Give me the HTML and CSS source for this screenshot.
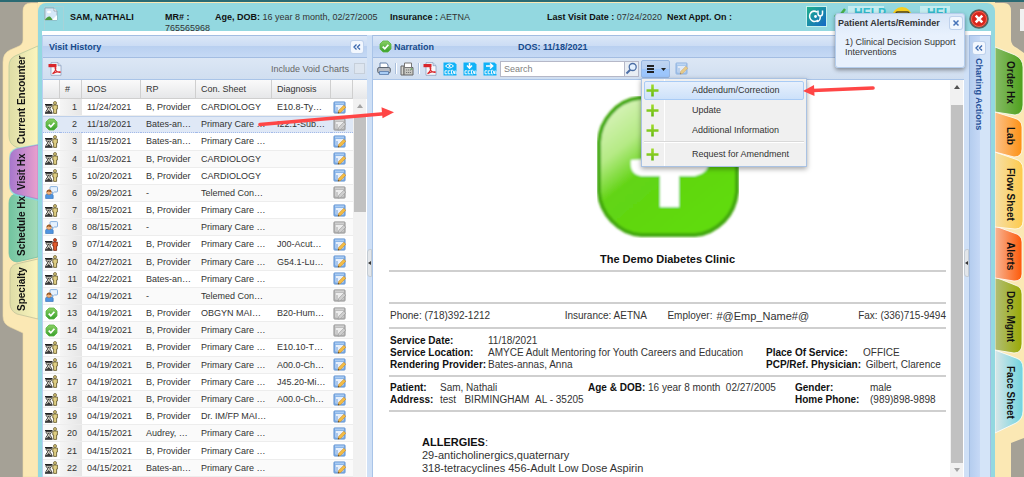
FILE: index.html
```html
<!DOCTYPE html>
<html lang="en">
<head>
<meta charset="utf-8">
<title>Visit History</title>
<link rel="stylesheet" href="styles.css">
</head>
<body>
<svg class="defs" aria-hidden="true">
  <defs>
    <linearGradient id="gCheck" x1="0" y1="0" x2="0" y2="1"><stop offset="0" stop-color="#8ad063"/><stop offset="1" stop-color="#38a02c"/></linearGradient>
    <linearGradient id="gPlus" x1="0" y1="0" x2="0" y2="1"><stop offset="0" stop-color="#a2dc2c"/><stop offset="1" stop-color="#64b812"/></linearGradient>
    <linearGradient id="gLogo" x1="0" y1="0" x2=".8" y2="1"><stop offset="0" stop-color="#e6f7cf"/><stop offset=".3" stop-color="#b5ea85"/><stop offset=".48" stop-color="#62d414"/><stop offset="1" stop-color="#60dc0a"/></linearGradient>
    <linearGradient id="gSteth" x1="0" y1="0" x2="1" y2="1"><stop offset="0" stop-color="#1fb38a"/><stop offset="1" stop-color="#1565c8"/></linearGradient>
    <filter id="soft"><feGaussianBlur stdDeviation="1.3"/></filter>
    <symbol id="wait" viewBox="0 0 13 13">
      <path d="M0 3.700h7.500M0 12h7.500" stroke="#222" stroke-width="1.300"/>
      <path d="M1 4.500h5.500v.7L4.700 7.900l1.800 2.300v1.300H1v-1.300l1.800-2.300L1 5.200z" fill="#d9d5c6" stroke="#333" stroke-width=".9"/>
      <path d="M1.700 11.300 3.700 9l2.100 2.300zM2.300 5.700h2.900L3.700 7.200z" fill="#333"/>
      <circle cx="10" cy="2" r="1.500" fill="#d9c878" stroke="#5e5328" stroke-width=".7"/>
      <path d="M7.800 4h4.600v4h-.8v4.400H8.600V8h-.8z" fill="#e0cf83" stroke="#5e5328" stroke-width=".8"/>
    </symbol>
    <symbol id="waitred" viewBox="0 0 13 13">
      <path d="M0 3.700h7.500M0 12h7.500" stroke="#222" stroke-width="1.300"/>
      <path d="M1 4.500h5.500v.7L4.700 7.900l1.800 2.300v1.300H1v-1.300l1.800-2.300L1 5.200z" fill="#d9d5c6" stroke="#333" stroke-width=".9"/>
      <path d="M1.700 11.300 3.700 9l2.100 2.300zM2.300 5.700h2.900L3.700 7.200z" fill="#333"/>
      <circle cx="10" cy="2" r="1.500" fill="#e04a22" stroke="#70220f" stroke-width=".7"/>
      <path d="M7.800 4h4.600v4h-.8v4.400H8.600V8h-.8z" fill="#e25a2c" stroke="#70220f" stroke-width=".8"/>
    </symbol>
    <symbol id="check" viewBox="0 0 13 13">
      <path d="M4 1h5l3 3v5l-3 3H4L1 9V4z" fill="url(#gCheck)" stroke="#5cb544" stroke-width=".8" stroke-linejoin="round"/>
      <path d="M3.700 6.600 5.800 8.700 9.400 4.700" fill="none" stroke="#fff" stroke-width="1.700"/>
    </symbol>
    <symbol id="chat" viewBox="0 0 13 13">
      <path d="M6 .6h5.500q1 0 1 1v3.400q0 1-1 1H9.500L7.500 7.800V6H6Q5 6 5 5V1.600q0-1 1-1z" fill="#e6f1fd" stroke="#6f9fd6" stroke-width=".8"/>
      <path d="M.6 12.500V9.500Q.6 8 2.300 8h3.900q2 0 2 1.500v3z" fill="#4f94e0" stroke="#2c6bb5" stroke-width=".6"/>
      <circle cx="4" cy="6.300" r="2.400" fill="#f0b27c" stroke="#b5713a" stroke-width=".5"/>
      <path d="M1.600 6.100q.2-2.500 2.500-2.500 2.200 0 2.300 2.200-2.200.4-2.900-.6-.6 1-1.900.9z" fill="#9a5a25"/>
    </symbol>
    <symbol id="edit" viewBox="0 0 13 13">
      <rect x=".8" y=".8" width="11.400" height="11.400" rx="1" fill="#6fa2e0" stroke="#7fa6d8" stroke-width=".8"/>
      <path d="M2 1.500h9v2H2z" fill="#a9cbf2"/><path d="M2.500 4h8v6.500h-8z" fill="#e6effa"/>
      <path d="M3.300 6h1.400v4.500H3.300z" fill="#8fb5e6"/>
      <path d="m5 12.200.8-2.900 5-5 2 1.900-5 5.200z" fill="#f3bd45" stroke="#c98322" stroke-width=".5"/>
      <path d="m5 12.200.4-1.500 1.100 1z" fill="#5b4020"/>
    </symbol>
    <symbol id="editoff" viewBox="0 0 13 13">
      <rect x=".8" y=".8" width="11.400" height="11.400" rx="1" fill="#adadad" stroke="#a2a2a2" stroke-width=".8"/>
      <path d="M2 1.500h9v2H2z" fill="#cfcfcf"/><path d="M2.500 4h8v6.500h-8z" fill="#ececec"/>
      <path d="M3.300 6h1.400v4.500H3.300z" fill="#bbb"/>
      <path d="m5 12.200.8-2.900 5-5 2 1.900-5 5.200z" fill="#cfcfcf" stroke="#8d8d8d" stroke-width=".5"/>
    </symbol>
    <symbol id="pdf" viewBox="0 0 14 14">
      <path d="M3 .7h7l3 3v9.600H3z" fill="#f7f8fb" stroke="#8297b8" stroke-width=".7"/>
      <path d="M10 .7v3h3" fill="#cbd8ea" stroke="#8297b8" stroke-width=".6"/>
      <path d="M.5 2h8v3.200h-8z" fill="#d9262b"/>
      <path d="M4.500 11.700q4-3.200 3.200-6-.8-1-.6.500.4 3.700 4.500 4.300 1.400 0 .4-.7-3.500-.4-7.500 1.900z" fill="none" stroke="#d9262b" stroke-width="1.100"/>
    </symbol>
    <symbol id="plus" viewBox="0 0 13 13"><path d="M5.200.5h2.600v4.700h4.700v2.600H7.800v4.700H5.200V7.800H.5V5.200h4.700z" fill="url(#gPlus)"/></symbol>
    <symbol id="ccda" viewBox="0 0 14 14">
      <path d="M.5.500h11L13.500 2.500v11H.5z" fill="#10b2f7"/>
      <path d="M4.300 8.800H2v3h2.300M7.500 8.800H5.200v3h2.300M8.500 8.300h1.200q1 .4 1 1.800t-1 1.800H8.500zM11.500 12V9.700l.7-1 .8 1V12" fill="none" stroke="#fff" stroke-width=".9"/>
    </symbol>
    <symbol id="dbl" viewBox="0 0 12 12"><path d="M5.500 3.500 3 6l2.500 2.500M9 3.500 6.500 6 9 8.500" fill="none" stroke="#3a68ae" stroke-width="1.300"/></symbol>
  </defs>
</svg>

<div class="app">
  <nav class="rail rail-left" aria-label="Chart sections">
    <svg class="rail-art" viewBox="0 0 38 475" width="38" height="475" aria-hidden="true">
      <defs>
        <linearGradient id="lt1"><stop offset="0" stop-color="#dedda6"/><stop offset="1" stop-color="#fbf5bd"/></linearGradient>
        <linearGradient id="lt2"><stop offset="0" stop-color="#a777cd"/><stop offset="1" stop-color="#e9a0cd"/></linearGradient>
        <linearGradient id="lt3"><stop offset="0" stop-color="#72c4a0"/><stop offset="1" stop-color="#a5dbbb"/></linearGradient>
      </defs>
      <path d="M38 1H31Q23 1 23 9V38Q23 43 17 45L10 48Q3 51 3 60V314Q3 322 10 325L23 331V475H38z" fill="#fbe8b4" stroke="#eedaa4" stroke-width=".6"/>
      <path d="M38 44 15 54Q9 57 9 64V134Q9 142 16 145L38 152z" fill="url(#lt1)" stroke="#b9c99c" stroke-width=".8"/>
      <path d="M38 257 16 262Q10 264 10 270V301Q10 309 17 312L38 317z" fill="url(#lt1)" stroke="#c1c29a" stroke-width=".8"/>
      <path d="M38 187 15 192Q9 194 9 201V251Q9 259 17 260L38 255z" fill="url(#lt3)" stroke="#72bfa5" stroke-width=".8"/>
      <path d="M38 142 16 146Q9 148 9 156V183Q9 192 17 194L38 199z" fill="#79dbe8" fill-opacity=".7"/>
      <path d="M38 143 17 147Q10 149 10 157V182Q10 190 17 192L38 197z" fill="url(#lt2)" stroke="#a876c4" stroke-width=".6"/>
    </svg>
    <div class="tabs">
      <button class="tab lt-current">Current Encounter</button>
      <button class="tab lt-visit">Visit Hx</button>
      <button class="tab lt-schedule">Schedule Hx</button>
      <button class="tab lt-specialty">Specialty</button>
    </div>
  </nav>

  <main class="chart">
    <header class="banner">
      <svg class="broken" viewBox="0 0 20 24" width="20" height="24" role="img" aria-label="Patient photo">
        <path d="M.5 24V.5h19V24" fill="none" stroke="#a6d3d8"/>
        <path d="M1 2h9l3 3v9H1z" fill="#d6e8f8" stroke="#8b99a5" stroke-width=".7"/>
        <path d="M10 2v3h3" fill="#fff" stroke="#8b99a5" stroke-width=".7"/>
        <ellipse cx="5" cy="6" rx="2" ry="1.200" fill="#fff"/>
        <path d="M1 14q2-4 5-3.500l3 3.500z" fill="#4b9c3a"/><path d="m8 14 5-5v5z" fill="#fff"/>
      </svg>
      <b class="b-name">SAM, NATHALI</b>
      <span class="b-mr"><b>MR# :</b><br>765565968</span>
      <span class="b-age"><b>Age, DOB:</b> 16 year 8 month, 02/27/2005</span>
      <span class="b-ins"><b>Insurance :</b> AETNA</span>
      <span class="b-last"><b>Last Visit Date :</b> 07/24/2020&nbsp; <b>Next Appt. On :</b></span>
      <div class="b-tools">
        <svg viewBox="0 0 21 21" width="21" height="21" role="img" aria-label="Clinical tools">
          <rect x=".5" y=".5" width="20" height="20" fill="url(#gSteth)" stroke="#c6f0ee"/>
          <path d="M11 6Q6.500 3.500 4 8q-1.500 4.500 2.500 7 3 1.300 5.500-1M12 4.500v3q0 2.500 2.200 2.500t2.300-2.500v-3M14.200 10v2q-.5 3.500-3.500 3.500" fill="none" stroke="#fff" stroke-width="1.500"/>
          <circle cx="9.500" cy="10.500" r="1.400" fill="#fff"/>
        </svg>
        <svg class="help" viewBox="0 0 120 24" width="120" height="24" aria-hidden="true">
          <path d="M16 0h36v24H16zM88 0h30v24H88z" fill="#c4ecf0"/>
          <path d="m3 9 3 3 7-9" fill="none" stroke="#48b04c" stroke-width="2.500"/>
          <circle cx="70" cy="11" r="10" fill="#f7cf20"/><rect x="64" y="6" width="13" height="9" rx="1.500" fill="#fff2a0" stroke="#50431a" stroke-width="1.500"/>
          <text x="22" y="11" class="help-text">HELP</text><text x="95" y="11" class="help-text">HEL</text>
        </svg>
        <button class="close-chart" aria-label="Close chart">
          <svg viewBox="0 0 20 20" width="20" height="20"><circle cx="10" cy="10" r="9" fill="#d9261c" stroke="#55635f" stroke-width="1.600"/><circle cx="10" cy="10" r="7.500" fill="none" stroke="#ee6a58"/><path d="m6.700 6.700 6.600 6.600m0-6.600-6.600 6.600" stroke="#fff" stroke-width="2.600"/></svg>
        </button>
      </div>
    </header>

    <div class="workspace">
      <section class="panel history">
        <div class="title"><h2>Visit History</h2><button class="tool" aria-label="Collapse"><svg width="12" height="12"><use href="#dbl"/></svg></button></div>
        <div class="toolbar">
          <button class="icon" aria-label="Export PDF"><svg width="14" height="14"><use href="#pdf"/></svg></button>
          <label class="void">Include Void Charts <input type="checkbox" disabled></label>
        </div>
        <div class="grid">
          <table>
            <colgroup><col class="c-stat"><col class="c-num"><col class="c-dos"><col class="c-rp"><col class="c-con"><col class="c-diag"><col class="c-edit"></colgroup>
            <thead><tr><th></th><th>#</th><th>DOS</th><th>RP</th><th>Con. Sheet</th><th>Diagnosis</th><th></th></tr></thead>
            <tbody>
              <tr><td><svg><use href="#wait"/></svg></td><td>1</td><td>11/24/2021</td><td>B, Provider</td><td>CARDIOLOGY</td><td>E10.8-Ty…</td><td><svg><use href="#edit"/></svg></td></tr>
              <tr class="selected"><td><svg><use href="#check"/></svg></td><td>2</td><td>11/18/2021</td><td>Bates-an…</td><td>Primary Care …</td><td>I22.1-Sub…</td><td><svg><use href="#editoff"/></svg></td></tr>
              <tr><td><svg><use href="#wait"/></svg></td><td>3</td><td>11/15/2021</td><td>Bates-an…</td><td>Primary Care …</td><td></td><td><svg><use href="#edit"/></svg></td></tr>
              <tr><td><svg><use href="#wait"/></svg></td><td>4</td><td>11/03/2021</td><td>B, Provider</td><td>CARDIOLOGY</td><td></td><td><svg><use href="#edit"/></svg></td></tr>
              <tr><td><svg><use href="#wait"/></svg></td><td>5</td><td>10/20/2021</td><td>B, Provider</td><td>CARDIOLOGY</td><td></td><td><svg><use href="#edit"/></svg></td></tr>
              <tr><td><svg><use href="#chat"/></svg></td><td>6</td><td>09/29/2021</td><td>-</td><td>Telemed Con…</td><td></td><td><svg><use href="#editoff"/></svg></td></tr>
              <tr><td><svg><use href="#wait"/></svg></td><td>7</td><td>08/15/2021</td><td>B, Provider</td><td>Primary Care …</td><td></td><td><svg><use href="#edit"/></svg></td></tr>
              <tr><td><svg><use href="#chat"/></svg></td><td>8</td><td>08/15/2021</td><td>-</td><td>Primary Care …</td><td></td><td><svg><use href="#editoff"/></svg></td></tr>
              <tr><td><svg><use href="#waitred"/></svg></td><td>9</td><td>07/14/2021</td><td>B, Provider</td><td>Primary Care …</td><td>J00-Acut…</td><td><svg><use href="#edit"/></svg></td></tr>
              <tr><td><svg><use href="#wait"/></svg></td><td>10</td><td>04/27/2021</td><td>B, Provider</td><td>Primary Care …</td><td>G54.1-Lu…</td><td><svg><use href="#edit"/></svg></td></tr>
              <tr><td><svg><use href="#wait"/></svg></td><td>11</td><td>04/22/2021</td><td>Bates-an…</td><td>Primary Care …</td><td></td><td><svg><use href="#edit"/></svg></td></tr>
              <tr><td><svg><use href="#chat"/></svg></td><td>12</td><td>04/19/2021</td><td>-</td><td>Telemed Con…</td><td></td><td><svg><use href="#editoff"/></svg></td></tr>
              <tr><td><svg><use href="#check"/></svg></td><td>13</td><td>04/19/2021</td><td>B, Provider</td><td>OBGYN MAI…</td><td>B20-Hum…</td><td><svg><use href="#editoff"/></svg></td></tr>
              <tr><td><svg><use href="#check"/></svg></td><td>14</td><td>04/19/2021</td><td>B, Provider</td><td>Primary Care …</td><td></td><td><svg><use href="#editoff"/></svg></td></tr>
              <tr><td><svg><use href="#wait"/></svg></td><td>15</td><td>04/19/2021</td><td>B, Provider</td><td>Primary Care …</td><td>E10.10-T…</td><td><svg><use href="#edit"/></svg></td></tr>
              <tr><td><svg><use href="#wait"/></svg></td><td>16</td><td>04/19/2021</td><td>B, Provider</td><td>Primary Care …</td><td>A00.0-Ch…</td><td><svg><use href="#edit"/></svg></td></tr>
              <tr><td><svg><use href="#wait"/></svg></td><td>17</td><td>04/19/2021</td><td>B, Provider</td><td>Primary Care …</td><td>J45.20-Mi…</td><td><svg><use href="#edit"/></svg></td></tr>
              <tr><td><svg><use href="#wait"/></svg></td><td>18</td><td>04/19/2021</td><td>B, Provider</td><td>Primary Care …</td><td>A00.0-Ch…</td><td><svg><use href="#edit"/></svg></td></tr>
              <tr><td><svg><use href="#wait"/></svg></td><td>19</td><td>04/19/2021</td><td>B, Provider</td><td>Dr. IM/FP MAI…</td><td></td><td><svg><use href="#edit"/></svg></td></tr>
              <tr><td><svg><use href="#wait"/></svg></td><td>20</td><td>04/15/2021</td><td>Audrey, …</td><td>Primary Care …</td><td></td><td><svg><use href="#edit"/></svg></td></tr>
              <tr><td><svg><use href="#wait"/></svg></td><td>21</td><td>04/15/2021</td><td>B, Provider</td><td>Primary Care …</td><td></td><td><svg><use href="#edit"/></svg></td></tr>
              <tr><td><svg><use href="#wait"/></svg></td><td>22</td><td>04/15/2021</td><td>Bates-an…</td><td>Primary Care …</td><td></td><td><svg><use href="#edit"/></svg></td></tr>
            </tbody>
          </table>
          <div class="side-scroll"><div class="head-fill"></div><div class="bar"><i class="up dim"></i><span class="thumb short"></span></div></div>
        </div>
      </section>

      <button class="splitter" aria-label="Collapse visit history"><span></span></button>

      <section class="panel narration">
        <div class="title"><svg width="13" height="13"><use href="#check"/></svg><h2>Narration</h2><h2 class="dos">DOS: 11/18/2021</h2></div>
        <div class="toolbar">
          <button class="icon" aria-label="Print"><svg viewBox="0 0 14 14" width="14" height="14"><path d="M3 6V1h6.500l1.500 2v3" fill="#fff" stroke="#6580a8"/><rect x=".7" y="5.500" width="12.600" height="5.500" rx="1.500" fill="#b9bdc4" stroke="#5b6470"/><path d="M2.500 9.500h9v3h-9z" fill="#a9cdf5" stroke="#5678a8" stroke-width=".8"/></svg></button>
          <i class="sep"></i>
          <button class="icon" aria-label="Fax"><svg viewBox="0 0 14 14" width="14" height="14"><path d="M1 4h3v9H1z" fill="#d7d7d2" stroke="#666"/><path d="M4 5.500h9V13H4z" fill="#c7c7c1" stroke="#666"/><path d="M4.500 1h7v4.500h-7z" fill="#fff" stroke="#777"/><path d="M6 8h5M6 10.500h5" stroke="#777" stroke-dasharray="1.200 .8"/><circle cx="11.500" cy="7" r=".8" fill="#4aa840"/></svg></button>
          <i class="sep"></i>
          <button class="icon" aria-label="PDF"><svg width="14" height="14"><use href="#pdf"/></svg></button>
          <button class="icon ccda" aria-label="View CCDA"><svg viewBox="0 0 14 14" width="14" height="14"><use href="#ccda"/><path d="M2.500 4q4-4 8 0-4 4-8 0z" fill="none" stroke="#fff"/><circle cx="6.500" cy="4" r="1" fill="#fff"/></svg></button>
          <button class="icon ccda" aria-label="Download CCDA"><svg viewBox="0 0 14 14" width="14" height="14"><use href="#ccda"/><path d="M6.500 1v4M4 3.500l2.500 2.700L9 3.500" fill="none" stroke="#fff" stroke-width="1.500"/></svg></button>
          <button class="icon ccda" aria-label="Send CCDA"><svg viewBox="0 0 14 14" width="14" height="14"><use href="#ccda"/><path d="M3 4h6M7 1.500 9.700 4 7 6.500" fill="none" stroke="#fff" stroke-width="1.500"/></svg></button>
          <div class="search"><input type="text" placeholder="Search" aria-label="Search"><button aria-label="Find"><svg viewBox="0 0 13 13" width="13" height="13"><path d="M5.500 7.500 1.500 11.500" stroke="#4b6ea5" stroke-width="2"/><circle cx="7.700" cy="5" r="3.500" fill="#e4f1ff" stroke="#4b6ea5" stroke-width="1.300"/></svg></button></div>
          <div class="menu-host">
            <button class="menu-button" aria-label="Chart options" aria-expanded="true"><svg viewBox="0 0 28 16" width="28" height="16"><path d="M5 5h7M5 8h7M5 11h7" stroke="#222" stroke-width="2"/><path d="M19 7h5l-2.500 3z" fill="#222"/></svg></button>
            <div class="menu" role="menu">
              <button role="menuitem" class="active"><svg><use href="#plus"/></svg><span>Addendum/Correction</span></button>
              <button role="menuitem"><svg><use href="#plus"/></svg><span>Update</span></button>
              <button role="menuitem"><svg><use href="#plus"/></svg><span>Additional Information</span></button>
              <hr>
              <button role="menuitem"><svg><use href="#plus"/></svg><span>Request for Amendment</span></button>
            </div>
          </div>
          <button class="icon faded" aria-label="Edit"><svg width="13" height="13"><use href="#edit"/></svg></button>
        </div>
        <div class="doc-wrap">
          <article class="doc">
            <svg class="clinic-logo" viewBox="0 0 142 142" width="142" height="142" role="img" aria-label="Clinic logo">
              <g filter="url(#soft)">
                <path d="M42 2H100Q119 4 129 18 140 30 140 46V96Q138 114 127 125 114 138 98 139H44Q27 138 15 125 3 113 2 96V46Q3 29 14 17 25 4 42 2z" fill="url(#gLogo)" stroke="#43a80d" stroke-width="4"/>
                <path d="M63 30h19v32h30q2 14-14 18H82v31H63V80H44Q32 78 34 64l29-2z" fill="#fff"/>
              </g>
            </svg>
            <h1>The Demo Diabetes Clinic</h1>
            <hr><div class="gap"></div><hr>
            <div class="contact"><span>Phone: (718)392-1212</span><span>Insurance: AETNA</span><span>Employer:</span><span class="emp">#@Emp_Name#@</span><span>Fax: (336)715-9494</span></div>
            <hr>
            <div class="facts service">
              <b>Service Date:</b><span>11/18/2021</span><b></b><span></span>
              <b>Service Location:</b><span>AMYCE Adult Mentoring for Youth Careers and Education</span><b>Place Of Service:</b><span>OFFICE</span>
              <b>Rendering Provider:</b><span>Bates-annas, Anna</span><b>PCP/Ref. Physician:</b><span>&nbsp;Gilbert, Clarence</span>
            </div>
            <hr>
            <div class="facts patient">
              <b>Patient:</b><span>Sam, Nathali</span><span><b>Age &amp; DOB:</b> 16 year 8 month &nbsp;02/27/2005</span><b>Gender:</b><span>male</span>
              <b>Address:</b><span>test &nbsp; BIRMINGHAM &nbsp;AL - 35205</span><span></span><b>Home Phone:</b><span>(989)898-9898</span>
            </div>
            <hr>
            <div class="allergies"><b>ALLERGIES</b>:<br>29-anticholinergics,quaternary<br>318-tetracyclines 456-Adult Low Dose Aspirin</div>
          </article>
          <div class="bar"><i class="up"></i><span class="thumb long"></span><i class="down"></i></div>
        </div>
      </section>

      <button class="splitter" aria-label="Expand charting actions"><span></span></button>

      <aside class="actions">
        <button class="tool" aria-label="Expand"><svg width="12" height="12"><use href="#dbl"/></svg></button>
        <h2>Charting Actions</h2>
      </aside>
    </div>

    <div class="alert" role="dialog" aria-labelledby="alertTitle">
      <div class="alert-head"><b id="alertTitle">Patient Alerts/Reminder</b><button class="tool" aria-label="Dismiss"><svg viewBox="0 0 12 12" width="12" height="12"><path d="m3.500 3.500 5 5m0-5-5 5" stroke="#4673b8" stroke-width="1.500"/></svg></button></div>
      <p>1) Clinical Decision Support Interventions</p>
    </div>
  </main>

  <nav class="rail rail-right" aria-label="Clinical sections">
    <svg class="rail-art" viewBox="0 0 29 475" width="29" height="475" aria-hidden="true">
      <defs>
        <linearGradient id="r1"><stop offset="0" stop-color="#86bb66"/><stop offset="1" stop-color="#4ea01c"/></linearGradient>
        <linearGradient id="r2"><stop offset="0" stop-color="#fcc188"/><stop offset="1" stop-color="#fd9114"/></linearGradient>
        <linearGradient id="r3"><stop offset="0" stop-color="#f6dfa6"/><stop offset="1" stop-color="#fdca4b"/></linearGradient>
        <linearGradient id="r4"><stop offset="0" stop-color="#f8b595"/><stop offset="1" stop-color="#fd5907"/></linearGradient>
        <linearGradient id="r5"><stop offset="0" stop-color="#b1bd76"/><stop offset="1" stop-color="#9aa904"/></linearGradient>
        <linearGradient id="r6"><stop offset="0" stop-color="#d8e6e7"/><stop offset="1" stop-color="#6fd3df"/></linearGradient>
      </defs>
      <path d="M0 1H9Q16 1 16 9V38Q16 43 22 46L29 51V436L16 441V475H0z" fill="#fbe8b4"/>
      <path d="M25 7h4v22h-4z" fill="#f1f1f1"/>
      <g stroke="#fff" stroke-width=".8">
        <path d="M0 348 21 356Q28 358 28 366V409Q28 417 21 421L0 431z" fill="url(#r6)"/>
        <path d="M0 275 20 283Q27 285 27 292V342Q27 351 19 351L0 348z" fill="url(#r5)"/>
        <path d="M0 224 19 231Q27 233 27 240V272Q27 279 19 279L0 276z" fill="url(#r4)"/>
        <path d="M0 150 20 157Q28 159 28 167V219Q28 227 20 227L0 225z" fill="url(#r3)"/>
        <path d="M0 110 19 116Q27 118 27 125V147Q27 155 19 155L0 150z" fill="url(#r2)"/>
        <path d="M0 45 20 53Q28 57 28 65V103Q28 112 20 113L0 110z" fill="url(#r1)"/>
      </g>
    </svg>
    <div class="tabs">
      <button class="tab rt-order">Order Hx</button>
      <button class="tab rt-lab">Lab</button>
      <button class="tab rt-flow">Flow Sheet</button>
      <button class="tab rt-alerts">Alerts</button>
      <button class="tab rt-doc">Doc. Mgmt</button>
      <button class="tab rt-face">Face Sheet</button>
    </div>
  </nav>

  <svg class="pointers" viewBox="0 0 1024 477" width="1024" height="477" aria-hidden="true">
    <path d="M260 124.500 384 113.700" stroke="#ff4646" stroke-width="3.600" stroke-linecap="round"/>
    <path d="m394 112.300-11.500 6-1-11z" fill="#ff4646"/>
    <path d="M873 88 813 90.500" stroke="#ff4646" stroke-width="3.600" stroke-linecap="round"/>
    <path d="m803 91 11-6 .5 11z" fill="#ff4646"/>
  </svg>
</div>
</body>
</html>
```
FILE: styles.css
```css
* { box-sizing: border-box; }
body { margin: 0; font: 9px/12px "Liberation Sans", Arial, sans-serif; color: #333; overflow: hidden; }
button { font: inherit; color: inherit; padding: 0; border: 0; background: none; cursor: pointer; }
h1, h2, p { margin: 0; font-size: inherit; }
svg { display: block; flex: none; }
.defs { position: absolute; width: 0; height: 0; }

.app { position: relative; display: flex; height: 100vh; border-top: 2px solid #2a6a73; background: #fbe8b4; }
.pointers { position: absolute; left: 0; top: -2px; pointer-events: none; z-index: 5; }

/* Folder tabs */
.rail { position: relative; flex: none; overflow: hidden; background: #a5a196; }
.rail-left { width: 38px; }
.rail-right { width: 29px; }
.rail-art { position: absolute; left: 0; top: 0; }
.tabs { position: relative; display: flex; flex-direction: column; }
.tab { writing-mode: vertical-rl; font-size: 10px; font-weight: bold; line-height: 12px; color: #111; text-align: center; }
.rail-left .tabs { padding: 48px 10px 0 16px; }
.rail-left .tab { transform: rotate(180deg); }
.rail-right .tabs { padding: 48px 8px 0 9px; }
.lt-current { height: 100px; }
.lt-visit { height: 44px; }
.lt-schedule { height: 64px; }
.lt-specialty { height: 62px; }
.rt-order { height: 64px; }
.rt-lab { height: 44px; }
.rt-flow { height: 72px; }
.rt-alerts { height: 52px; }
.rt-doc { height: 70px; }
.rt-face { height: 80px; }

/* Chart and patient banner */
.chart { position: relative; flex: 1; min-width: 0; display: flex; flex-direction: column; margin-top: 1px; background: #93d8e0; border-radius: 8px 8px 0 0; padding: 0 4px; }
.banner { display: flex; height: 28px; overflow: hidden; flex: none; line-height: 11px; padding: 3px 0 0 2px; white-space: nowrap; }
.banner > * { flex: none; }
.banner > b, .banner > span { padding-top: 6px; }
.banner b { color: #111; }
.broken { width: 20px; margin-right: 6px; }
.b-name { width: 95px; }
.b-mr { width: 50px; }
.b-age { width: 175px; }
.b-ins { width: 157px; }
.banner > .b-last { flex: 1; }
.b-tools { display: flex; align-items: flex-start; gap: 5px; }
.help { margin-right: 12px; }
.help-text { font-size: 12px; font-weight: bold; fill: #35bccd; }
.close-chart { margin: 3px 2px 0 0; }

.workspace { flex: 1; min-height: 0; display: flex; border-top: 4px solid #fff; background: #d3e1f5; }
.panel { display: flex; flex-direction: column; min-height: 0; min-width: 0; }
.history { width: 325px; flex: none; border-left: 1px solid #b9cff0; }
.narration { flex: 1; border-left: 1px solid #a9c4e8; }

.title { display: flex; align-items: center; height: 23px; flex: none; padding: 0 4px 0 6px; border-top: 1px solid #a3bde2; border-bottom: 1px solid #a3bde2; background: linear-gradient(#dbe7f7, #cbdcf4 48%, #b9d0f0 50%, #c5d9f5); color: #15498b; }
.title h2 { flex: 1; }
.tool { display: grid; place-items: center; width: 12px; height: 12px; border-radius: 2px; background: #f2f7fe; box-shadow: 0 0 0 1px #bed1ec; }
.toolbar { display: flex; align-items: center; height: 22px; flex: none; padding: 0 2px 0 5px; background: linear-gradient(#dce7f5, #d0def0); border-bottom: 1px solid #a9c4e8; }
.icon { flex: none; }
.void { display: flex; align-items: center; gap: 5px; margin-left: auto; color: #666; }
.void input { appearance: none; width: 11px; height: 11px; margin: 0; border: 1px solid #c6cfda; background: #dde5ef; }

/* Visit table */
.grid { flex: 1; min-height: 0; display: flex; overflow: hidden; background: #fff; }
table { flex: 1; height: 100%; border-collapse: separate; border-spacing: 0; table-layout: fixed; }
.c-stat { width: 17px; } .c-num { width: 22px; } .c-dos { width: 59px; } .c-rp { width: 55px; }
.c-con { width: 76px; } .c-diag { width: 59px; } .c-edit { width: 22px; }
th { height: 19px; padding: 0 0 0 5px; font-weight: normal; text-align: left; background: linear-gradient(#fafafa, #e6e7e9); border-right: 1px solid #cfcfcf; border-bottom: 1px solid #cfcfcf; }
td { padding: 0 0 0 5px; line-height: 12px; white-space: nowrap; overflow: hidden; border-bottom: 1px solid #ededed; }
td svg { width: 13px; height: 13px; }
td:first-child { padding: 0 0 0 2px; }
td:nth-child(2) { padding: 0 5px 0 0; text-align: right; background: linear-gradient(90deg, #f5f5f5, #e6e6e6); }
td:last-child { padding: 0 0 0 2px; }
tbody tr:nth-child(even) { background: #fafafa; }
tbody tr.selected { background: #dfe8f6; }
.selected td, .selected td:nth-child(2) { background: #dfe8f6; border-bottom: 1px dotted #a3bae9; box-shadow: inset 0 1px #bed0ea; }
.side-scroll { width: 14px; flex: none; display: flex; flex-direction: column; }
.head-fill { height: 19px; background: linear-gradient(#fafafa, #e6e7e9); }
.bar { flex: 1; display: flex; flex-direction: column; align-items: center; background: #f1f1f1; padding: 5px 0; width: 13px; }
.up, .down { border: 3px solid transparent; }
.up { border-top: 0; border-bottom: 4px solid #505050; }
.up.dim { border-bottom-color: #a3a3a3; }
.down { border-bottom: 0; border-top: 4px solid #a3a3a3; }
.thumb { width: 12px; background: #c1c1c1; }
.short { height: 96px; margin-top: 8px; }
.long { flex: 1; margin: 16px 0 5px; }

.splitter { flex: none; width: 5px; display: flex; align-items: center; padding-top: 14px; background: #cfe0f6; }
.splitter span { width: 5px; height: 28px; display: flex; align-items: center; border-radius: 3px 0 0 3px; background: #e2e6ea; border: 1px solid #c4ccd4; }
.splitter span::before { content: ""; border: 2px solid transparent; border-right: 3px solid #333; border-left: 0; }

/* Narration */
.narration .title { gap: 2px; }
.narration .title h2 { flex: none; width: 122px; }
.narration .toolbar { padding-left: 4px; gap: 5px; }
.sep { width: 1px; height: 11px; background: #a9bfdc; box-shadow: 1px 0 #fff; margin: 0 -1px; }
.ccda + .ccda, .icon + .ccda { margin-left: 1px; }
.search { display: flex; height: 16px; margin-left: -2px; width: 139px; }
.search input { flex: 1; min-width: 0; font: inherit; padding: 0 3px; border: 1px solid #b5b8c8; background: #fff; outline: 0; }
.search input::placeholder { color: #808080; opacity: 1; }
.search button { width: 14px; background: #e9eef4; border: 1px solid #b5b8c8; border-left: 0; }
.menu-host { position: relative; margin-left: -3px; }
.menu-button { height: 18px; width: 29px; display: grid; place-items: center; border: 1px solid #98b7e2; border-radius: 2px; background: linear-gradient(#bfd4f0, #b4cff3 50%, #9cc6fc 52%); }
.faded { opacity: .6; }
.menu { position: absolute; left: 0; top: 18px; z-index: 3; width: 166px; padding: 2px 2px 1px; background: linear-gradient(90deg, transparent 22px, #fff 22px 23px, transparent 23px), #f0f0f0; border: 1px solid #a9c2e3; box-shadow: 0 2px 5px rgba(0, 0, 0, .35); }
.menu button { display: flex; align-items: center; width: 100%; height: 19px; text-align: left; border: 1px solid transparent; border-radius: 2px; padding-left: 1px; margin-bottom: 1px; }
.menu svg { width: 13px; height: 13px; margin-right: 33px; }
.menu .active { border-color: #a9cbf5; background: linear-gradient(#e7f0fc, #cde1fa); }
.menu hr { height: 2px; margin: 1px 0 2px; border: 0; background: #d9d9d9; border-bottom: 1px solid #fff; }

.doc-wrap { flex: 1; min-height: 0; display: flex; background: #fff; }
.doc-wrap .bar { flex: none; margin-right: 1px; }
.doc { flex: 1; min-width: 0; overflow: hidden; padding: 16px 4px 0 16px; font-size: 10px; line-height: 12px; }
.doc b, .doc h1 { color: #111; }
.doc hr { height: 2px; margin: 0; border: 0; background: #cfcfcf; }
.clinic-logo { margin: 0 auto; }
h1 { font-size: 11px; line-height: 14px; margin: 14px 0 4px; text-align: center; }
.gap { height: 30px; }
.contact { display: grid; grid-template-columns: 175fr 103fr 49px 142fr auto; align-items: center; height: 23px; padding-left: 1px; white-space: nowrap; }
.emp { font-size: 11px; }
.facts { display: grid; grid-auto-rows: 12px; padding: 6px 0 4px 1px; white-space: nowrap; }
.service { grid-template-columns: 98px 278fr 97px 83px; }
.patient { grid-template-columns: 50px 148fr 207fr 75px 76px; padding-top: 5px; }
.allergies { font-size: 11px; line-height: 13px; padding: 24px 0 0 33px; }

/* Collapsed panel */
.actions { flex: none; width: 22px; display: flex; flex-direction: column; align-items: center; gap: 4px; padding: 6px 2px 0 0; background: linear-gradient(90deg, #b5cdef, #c6d9f6 50%, #d4e4f8 52%); border: 1px solid #a3bde2; border-bottom: 0; }
.actions h2 { writing-mode: vertical-rl; color: #1f4f98; white-space: nowrap; }

/* Reminder */
.alert { position: absolute; right: 30px; top: 10px; z-index: 4; width: 130px; height: 55px; padding: 3px 2px; border: 1px solid #b4cdec; border-radius: 3px; background: linear-gradient(#d7e5f7, #e8f1fd 40%); box-shadow: 0 2px 4px rgba(0, 0, 0, .4); }
.alert-head { display: flex; justify-content: space-between; }
.alert p { padding: 8px 0 0 7px; line-height: 10px; }
```
